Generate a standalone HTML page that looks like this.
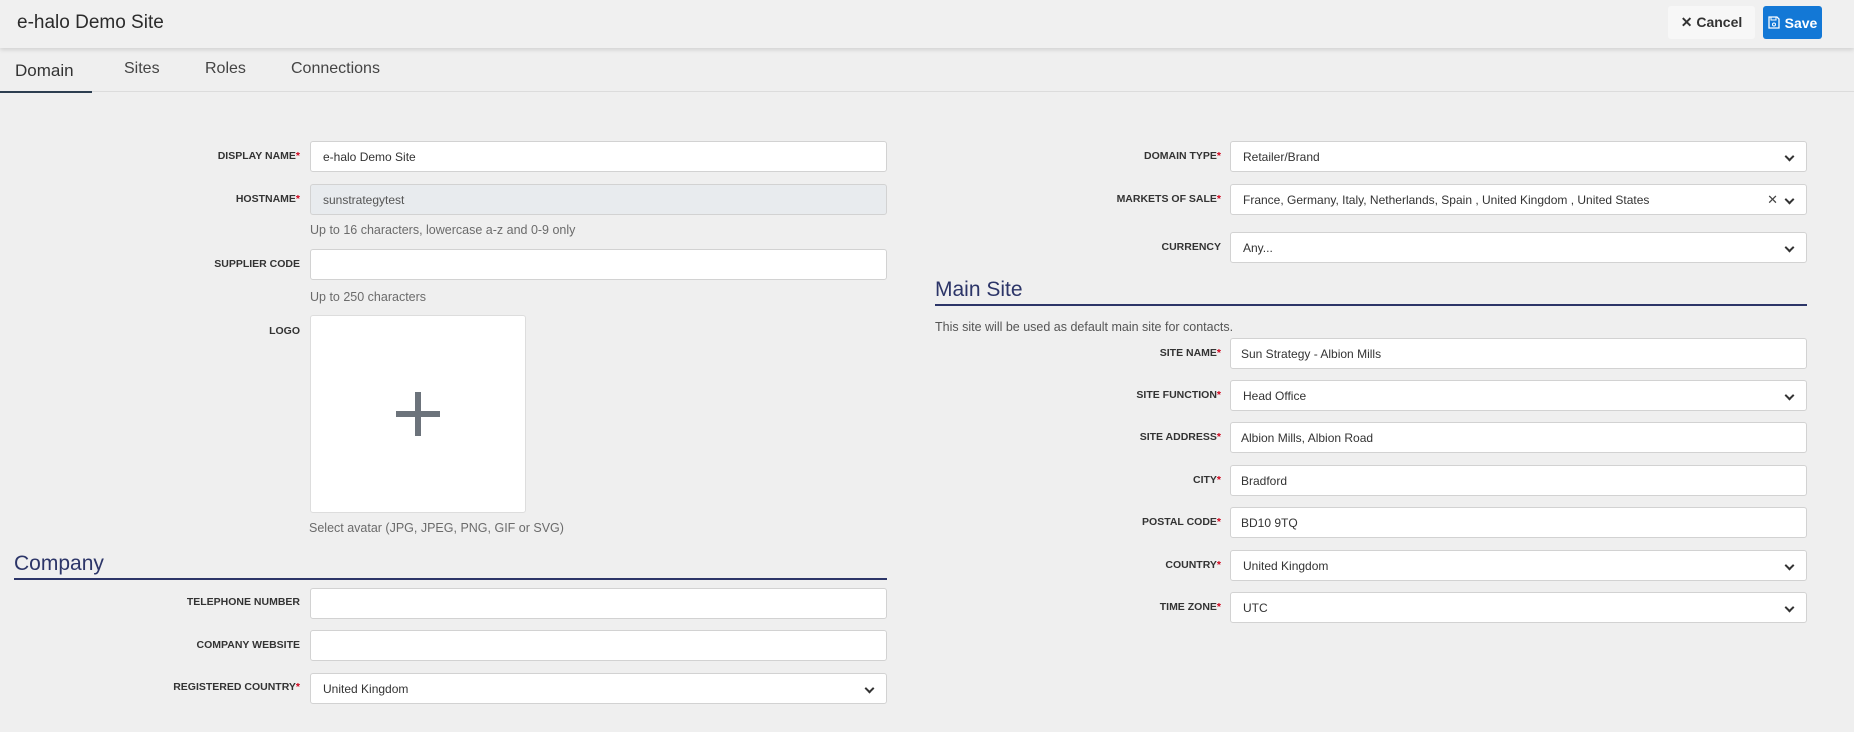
<!DOCTYPE html>
<html><head><meta charset="utf-8"><style>
*{box-sizing:border-box;margin:0;padding:0}
body{width:1854px;height:732px;background:#efefef;font-family:"Liberation Sans",sans-serif;position:relative;overflow:hidden;color:#333}
.hdr{position:absolute;left:0;top:0;width:1854px;height:48px;background:#f0f0f0;box-shadow:0 2px 4px rgba(0,0,0,.12)}
.title{position:absolute;left:17px;top:12px;font-size:19px;color:#2b2b2b}
.btn{position:absolute;top:6px;height:33px;border-radius:3px;font-size:14px;font-weight:bold;display:flex;align-items:center;justify-content:center}
.tab{position:absolute;top:60px;font-size:16px;color:#444}
.lbl{position:absolute;font-size:10.5px;font-weight:bold;color:#333;text-align:right;width:290px}
.lbl i{color:#d0021b;font-style:normal}
.in{position:absolute;height:31px;background:#fff;border:1px solid #d2d2d2;border-radius:3px;font-size:12px;padding-left:12px;display:flex;align-items:center;color:#333}
.in.dis{background:#e8ebee;color:#555}
.sel::after{content:"";position:absolute;right:13px;top:11px;width:5px;height:5px;border-right:2px solid #333;border-bottom:2px solid #333;transform:rotate(45deg)}
.help{position:absolute;font-size:12.5px;color:#6b6b6b}
.h2{position:absolute;font-size:21px;color:#2c3568}
.rule{position:absolute;height:1.5px;background:#2c3568}
</style></head><body>
<div class="hdr"><div class="title">e-halo Demo Site</div>
<div class="btn" style="left:1668px;width:87px;background:#f7f7f7;color:#333">✕&nbsp;Cancel</div>
<div class="btn" style="left:1763px;width:59px;background:#1378d6;color:#fff"><svg width="12" height="13" viewBox="0 0 12 13" style="margin-right:5px"><path d="M1 1h8l2 2v9H1z" fill="none" stroke="#fff" stroke-width="1.3"/><rect x="3" y="1" width="5" height="3" fill="none" stroke="#fff"/><circle cx="6" cy="8.5" r="1.5" fill="none" stroke="#fff"/></svg>Save</div>
</div>
<div class="tab" style="left:15px;top:61px;font-size:17px;color:#333">Domain</div>
<div class="tab" style="left:124px">Sites</div>
<div class="tab" style="left:205px">Roles</div>
<div class="tab" style="left:291px">Connections</div>
<div style="position:absolute;left:0;top:91px;width:1854px;height:1px;background:#dcdcdc"></div>
<div style="position:absolute;left:0;top:91px;width:92px;height:2px;background:#2c3e50"></div>

<div class="lbl" style="left:10px;top:150px">DISPLAY NAME<i>*</i></div>
<div class="in" style="left:310px;top:141px;width:577px">e-halo Demo Site</div>
<div class="lbl" style="left:10px;top:193px">HOSTNAME<i>*</i></div>
<div class="in dis" style="left:310px;top:184px;width:577px">sunstrategytest</div>
<div class="help" style="left:310px;top:223px">Up to 16 characters, lowercase a-z and 0-9 only</div>
<div class="lbl" style="left:10px;top:258px">SUPPLIER CODE</div>
<div class="in" style="left:310px;top:249px;width:577px"></div>
<div class="help" style="left:310px;top:290px">Up to 250 characters</div>
<div class="lbl" style="left:10px;top:325px">LOGO</div>
<div style="position:absolute;left:310px;top:315px;width:216px;height:198px;background:#fff;border:1px solid #ddd;border-radius:3px"></div>
<div style="position:absolute;left:396px;top:411px;width:44px;height:6px;background:#6c737b"></div>
<div style="position:absolute;left:415px;top:392px;width:6px;height:44px;background:#6c737b"></div>
<div class="help" style="left:309px;top:521px">Select avatar (JPG, JPEG, PNG, GIF or SVG)</div>
<div class="h2" style="left:14px;top:552px">Company</div>
<div class="rule" style="left:14px;top:578px;width:873px"></div>
<div class="lbl" style="left:10px;top:596px">TELEPHONE NUMBER</div>
<div class="in" style="left:310px;top:588px;width:577px"></div>
<div class="lbl" style="left:10px;top:639px">COMPANY WEBSITE</div>
<div class="in" style="left:310px;top:630px;width:577px"></div>
<div class="lbl" style="left:10px;top:681px">REGISTERED COUNTRY<i>*</i></div>
<div class="in sel" style="left:310px;top:673px;width:577px">United Kingdom</div>

<div class="lbl" style="left:931px;top:150px">DOMAIN TYPE<i>*</i></div>
<div class="in sel" style="left:1230px;top:141px;width:577px">Retailer/Brand</div>
<div class="lbl" style="left:931px;top:193px">MARKETS OF SALE<i>*</i></div>
<div class="in sel" style="left:1230px;top:184px;width:577px">France, Germany, Italy, Netherlands, Spain , United Kingdom , United States<span style="position:absolute;right:28px;font-size:13px;color:#444">✕</span></div>
<div class="lbl" style="left:931px;top:241px">CURRENCY</div>
<div class="in sel" style="left:1230px;top:232px;width:577px">Any...</div>
<div class="h2" style="left:935px;top:278px">Main Site</div>
<div class="rule" style="left:935px;top:304px;width:872px"></div>
<div class="help" style="left:935px;top:320px;color:#555">This site will be used as default main site for contacts.</div>
<div class="lbl" style="left:931px;top:347px">SITE NAME<i>*</i></div>
<div class="in" style="left:1230px;top:338px;width:577px;padding-left:10px">Sun Strategy - Albion Mills</div>
<div class="lbl" style="left:931px;top:389px">SITE FUNCTION<i>*</i></div>
<div class="in sel" style="left:1230px;top:380px;width:577px">Head Office</div>
<div class="lbl" style="left:931px;top:431px">SITE ADDRESS<i>*</i></div>
<div class="in" style="left:1230px;top:422px;width:577px;padding-left:10px">Albion Mills, Albion Road</div>
<div class="lbl" style="left:931px;top:474px">CITY<i>*</i></div>
<div class="in" style="left:1230px;top:465px;width:577px;padding-left:10px">Bradford</div>
<div class="lbl" style="left:931px;top:516px">POSTAL CODE<i>*</i></div>
<div class="in" style="left:1230px;top:507px;width:577px;padding-left:10px">BD10 9TQ</div>
<div class="lbl" style="left:931px;top:559px">COUNTRY<i>*</i></div>
<div class="in sel" style="left:1230px;top:550px;width:577px">United Kingdom</div>
<div class="lbl" style="left:931px;top:601px">TIME ZONE<i>*</i></div>
<div class="in sel" style="left:1230px;top:592px;width:577px">UTC</div>
</body></html>
